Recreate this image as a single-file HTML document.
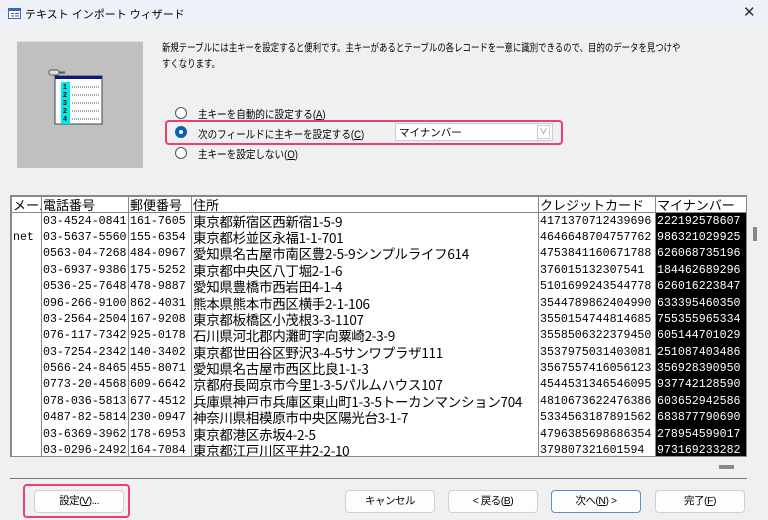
<!DOCTYPE html>
<html><head><meta charset="utf-8"><style>
*{box-sizing:border-box;margin:0;padding:0}
body{width:768px;height:520px;background:#f0f0f0;font-family:"Liberation Sans","Noto Sans CJK JP",sans-serif;position:relative;overflow:hidden;color:#000}
.abs{position:absolute}
.title{left:0;top:0;width:768px;height:27px;background:#eef1f7;font-size:12px}
.p{font-size:10.5px;line-height:16px;white-space:nowrap;transform:scaleX(0.8);transform-origin:0 0}
.radio{width:12px;height:12px;border:1px solid #555;border-radius:50%;background:#fff}
.radio.on{border:none;background:#0a5fb4}
.radio.on::after{content:"";position:absolute;left:4px;top:4px;width:4px;height:4px;border-radius:50%;background:#fff}
.lbl{font-size:11px;white-space:nowrap;transform:scaleX(0.87);transform-origin:0 0}
table{border-collapse:collapse;font-family:"Liberation Mono","Noto Sans CJK JP",monospace;font-size:11.6px}
tr{height:16.4px}
td{border-left:1px solid #888;height:16.4px;padding:0 0 0 1px;white-space:nowrap;overflow:hidden;vertical-align:middle;line-height:15px}
th{font-weight:normal;text-align:left;border:1px solid #888;height:16px;padding:0 0 0 1px;font-family:"Noto Sans CJK JP",sans-serif;font-size:13px;line-height:15px;white-space:nowrap;overflow:hidden}
td.a{font-size:13.5px;font-family:"Noto Sans CJK JP",monospace;letter-spacing:-0.3px;line-height:15px}
td.k{background:#000;color:#fff}
.btn{height:23px;background:#fdfdfd;border:1px solid #d0d0d0;border-radius:4px;font-size:10.5px;text-align:center;line-height:21px;letter-spacing:-0.5px}
.pink{border:2px solid #ee3d6e;border-radius:4px}
</style></head><body>
<div class="abs title">
 <svg class="abs" style="left:8px;top:8px" width="13" height="11"><rect x="0.5" y="0.5" width="12" height="10" fill="#fff" stroke="#3a6ac0"/><rect x="1" y="1" width="11" height="2" fill="#3a6ac0"/><line x1="3" y1="5.5" x2="6" y2="5.5" stroke="#555"/><line x1="3" y1="8" x2="6" y2="8" stroke="#555"/><line x1="7" y1="5.5" x2="11" y2="5.5" stroke="#555"/><line x1="7" y1="8" x2="11" y2="8" stroke="#555"/></svg>
 <div class="abs" style="left:25px;top:6px;font-size:11px">テキスト インポート ウィザード</div>
 <div class="abs" style="left:743px;top:3px;font-size:15px;color:#333">✕</div>
</div>
<div class="abs" style="left:17px;top:41px;width:126px;height:127px;background:#c0c0c0;border-top:1px solid #e0e0e0"></div>
<svg class="abs" style="left:48px;top:66px" width="60" height="60">
 <rect x="1" y="4" width="10" height="5" rx="2" fill="#ddd" stroke="#555"/><line x1="11" y1="6.5" x2="17" y2="6.5" stroke="#555" stroke-width="2"/>
 <rect x="7" y="10" width="47" height="48" fill="#fff" stroke="#444"/>
 <rect x="7" y="10" width="47" height="3" fill="#0a1a80"/>
 <rect x="13" y="16" width="9" height="42" fill="#00e8e8"/>
 <g font-family="Liberation Sans" font-size="7" font-weight="bold"><text x="15" y="23">1</text><text x="15" y="31">2</text><text x="15" y="39">3</text><text x="15" y="47">2</text><text x="15" y="55">4</text></g>
 <g stroke="#aaa" stroke-width="2" stroke-dasharray="1 1"><line x1="24" y1="21" x2="52" y2="21"/><line x1="24" y1="29" x2="52" y2="29"/><line x1="24" y1="37" x2="52" y2="37"/><line x1="24" y1="45" x2="52" y2="45"/><line x1="24" y1="53" x2="52" y2="53"/></g>
</svg>
<div class="abs p" style="left:162px;top:40px">新規テーブルには主キーを設定すると便利です。主キーがあるとテーブルの各レコードを一意に識別できるので、目的のデータを見つけや<br>すくなります。</div>
<div class="abs radio" style="left:175px;top:107px"></div>
<div class="abs lbl" style="left:198px;top:106px">主キーを自動的に設定する(<u>A</u>)</div>
<div class="abs pink" style="left:165px;top:120px;width:398px;height:25px"></div>
<div class="abs radio on" style="left:175px;top:126px"></div>
<div class="abs lbl" style="left:198px;top:126px">次のフィールドに主キーを設定する(<u>C</u>)</div>
<div class="abs" style="left:395px;top:123px;width:158px;height:18px;background:#fff;border:1px solid #ccc;font-size:10.5px;padding:1px 3px">マイナンバー<div class="abs" style="right:2px;top:1px;width:13px;height:14px;border:1px solid #ccc;font-size:8px;text-align:center;color:#777;line-height:12px">∨</div></div>
<div class="abs radio" style="left:175px;top:147px"></div>
<div class="abs lbl" style="left:198px;top:146px">主キーを設定しない(<u>O</u>)</div>

<div class="abs" style="left:10px;top:195px;width:737px;height:262px;background:#fff;border:1px solid #888;overflow:hidden">
<table style="width:736px;table-layout:fixed">
<colgroup><col style="width:30px"><col style="width:87px"><col style="width:63px"><col style="width:347px"><col style="width:117px"><col style="width:92px"></colgroup>
<tr><th>メール</th><th>電話番号</th><th>郵便番号</th><th>住所</th><th>クレジットカード</th><th>マイナンバー</th></tr>
<tr><td></td><td>03-4524-0841</td><td>161-7605</td><td class="a">東京都新宿区西新宿1-5-9</td><td>4171370712439696</td><td class="k">222192578607</td></tr>
<tr><td>net</td><td>03-5637-5560</td><td>155-6354</td><td class="a">東京都杉並区永福1-1-701</td><td>4646648704757762</td><td class="k">986321029925</td></tr>
<tr><td></td><td>0563-04-7268</td><td>484-0967</td><td class="a">愛知県名古屋市南区豊2-5-9シンプルライフ614</td><td>4753841160671788</td><td class="k">626068735196</td></tr>
<tr><td></td><td>03-6937-9386</td><td>175-5252</td><td class="a">東京都中央区八丁堀2-1-6</td><td>376015132307541</td><td class="k">184462689296</td></tr>
<tr><td></td><td>0536-25-7648</td><td>478-9887</td><td class="a">愛知県豊橋市西岩田4-1-4</td><td>5101699243544778</td><td class="k">626016223847</td></tr>
<tr><td></td><td>096-266-9100</td><td>862-4031</td><td class="a">熊本県熊本市西区横手2-1-106</td><td>3544789862404990</td><td class="k">633395460350</td></tr>
<tr><td></td><td>03-2564-2504</td><td>167-9208</td><td class="a">東京都板橋区小茂根3-3-1107</td><td>3550154744814685</td><td class="k">755355965334</td></tr>
<tr><td></td><td>076-117-7342</td><td>925-0178</td><td class="a">石川県河北郡内灘町字向粟崎2-3-9</td><td>3558506322379450</td><td class="k">605144701029</td></tr>
<tr><td></td><td>03-7254-2342</td><td>140-3402</td><td class="a">東京都世田谷区野沢3-4-5サンワプラザ111</td><td>3537975031403081</td><td class="k">251087403486</td></tr>
<tr><td></td><td>0566-24-8465</td><td>455-8071</td><td class="a">愛知県名古屋市西区比良1-1-3</td><td>3567557416056123</td><td class="k">356928390950</td></tr>
<tr><td></td><td>0773-20-4568</td><td>609-6642</td><td class="a">京都府長岡京市今里1-3-5パルムハウス107</td><td>4544531346546095</td><td class="k">937742128590</td></tr>
<tr><td></td><td>078-036-5813</td><td>677-4512</td><td class="a">兵庫県神戸市兵庫区東山町1-3-5トーカンマンション704</td><td>4810673622476386</td><td class="k">603652942586</td></tr>
<tr><td></td><td>0487-82-5814</td><td>230-0947</td><td class="a">神奈川県相模原市中央区陽光台3-1-7</td><td>5334563187891562</td><td class="k">683877790690</td></tr>
<tr><td></td><td>03-6369-3962</td><td>178-6953</td><td class="a">東京都港区赤坂4-2-5</td><td>4796385698686354</td><td class="k">278954599017</td></tr>
<tr><td></td><td>03-0296-2492</td><td>164-7084</td><td class="a">東京都江戸川区平井2-2-10</td><td>379807321601594</td><td class="k">973169233282</td></tr>
<tr><td></td><td>03-2660-0040</td><td>144-7042</td><td class="a">東京都小金井市緑町2-5-4</td><td>4114841022121731</td><td class="k">546104198346</td></tr>
</table></div>
<div class="abs" style="left:753px;top:227px;width:4px;height:14px;background:#888"></div>
<div class="abs" style="left:719px;top:465px;width:15px;height:4px;background:#888"></div>
<div class="abs" style="left:10px;top:478px;width:737px;height:1px;background:#777"></div>
<div class="abs pink" style="left:23px;top:484px;width:107px;height:34px"></div>
<div class="abs btn" style="left:34px;top:490px;width:90px">設定(<u>V</u>)...</div>
<div class="abs btn" style="left:345px;top:490px;width:90px">キャンセル</div>
<div class="abs btn" style="left:448px;top:490px;width:90px">&lt; 戻る(<u>B</u>)</div>
<div class="abs btn" style="left:551px;top:490px;width:90px;border-color:#5b8fd0">次へ(<u>N</u>) &gt;</div>
<div class="abs btn" style="left:655px;top:490px;width:90px">完了(<u>F</u>)</div>
</body></html>
